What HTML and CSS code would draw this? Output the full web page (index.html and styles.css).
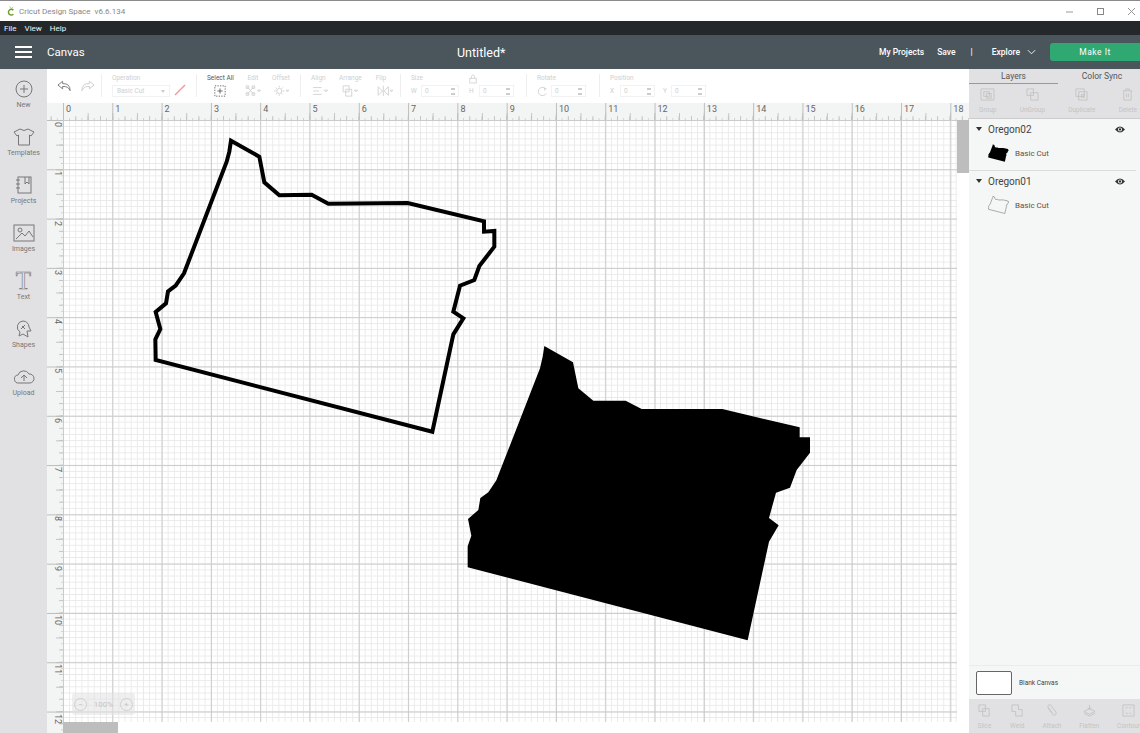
FILE: index.html
```html
<!DOCTYPE html>
<html lang="en">
<head>
    <meta charset="UTF-8">
    <title>Cricut Design Space</title>
    <link rel="stylesheet" href="styles.css">
</head>
<body>
<div class="app">
    <div class="titlebar">
        <svg class="logo" viewBox="0 0 10 12"><path d="M8 5 A3.6 3.6 0 1 0 8 10" fill="none" stroke="#6f9a2c" stroke-width="1.8"/><path d="M3 .5 Q5 1 5.5 3.2 M8 1 L5.5 3" fill="none" stroke="#8cc63f" stroke-width="1"/></svg>
        <span class="app-name">Cricut Design Space</span>
        <span class="app-version">v6.6.134</span>
        <div class="window-controls">
            <svg viewBox="0 0 9 9"><path d="M1 5H8" stroke="#999" fill="none"/></svg>
            <svg viewBox="0 0 9 9"><rect x="1.5" y="1.5" width="6" height="6" stroke="#888" fill="none"/></svg>
            <svg viewBox="0 0 9 9"><path d="M1 1L8 8M8 1L1 8" stroke="#999" fill="none"/></svg>
        </div>
    </div>
    <div class="menubar">
        <span>File</span>
        <span>View</span>
        <span>Help</span>
    </div>
    <div class="header">
        <div class="header-left">
            <div class="hamburger"><i></i><i></i><i></i></div>
            <span class="page-name">Canvas</span>
        </div>
        <span class="doc-name">Untitled*</span>
        <div class="header-right">
            <span>My Projects</span>
            <span class="save">Save</span>
            <span class="sep">|</span>
            <span class="explore">Explore</span>
            <svg class="chevron" viewBox="0 0 10 6"><path d="M1 1L5 5L9 1" fill="none" stroke="#fff"/></svg>
            <button class="make-it">Make It</button>
        </div>
    </div>

    <div class="main">
        <nav class="sidebar">
            <div class="nav-item">
                <svg viewBox="0 0 20 20"><circle cx="10" cy="10" r="8" /><path d="M10 6V14M6 10H14"/></svg>
                <span>New</span>
            </div>
            <div class="nav-item">
                <svg viewBox="0 0 22 20"><path d="M7 2 Q11 5 15 2 L21 5 L18 9 L16.500 8 L16.500 18 L5.500 18 L5.500 8 L4 9 L1 5 Z"/></svg>
                <span>Templates</span>
            </div>
            <div class="nav-item">
                <svg viewBox="0 0 20 20"><rect x="4" y="2" width="13" height="16"/><path d="M2 5H6M2 9H6M2 13H6M11 2V9L13 7L15 9V2"/></svg>
                <span>Projects</span>
            </div>
            <div class="nav-item">
                <svg viewBox="0 0 22 20"><rect x="1" y="2" width="20" height="16"/><circle cx="7" cy="7" r="2"/><path d="M3 16L9 10L12 13L16 8L20 14"/></svg>
                <span>Images</span>
            </div>
            <div class="nav-item">
                <b class="text-glyph">T</b>
                <span>Text</span>
            </div>
            <div class="nav-item">
                <svg viewBox="0 0 20 20"><path d="M9 2 A6 6 0 0 1 15 8 L17 12 L13 12 L14 18 L9 15 L5 17 L6 13 A6 6 0 0 1 9 2Z"/><path d="M8 7L11 10M11 6L7 10"/></svg>
                <span>Shapes</span>
            </div>
            <div class="nav-item">
                <svg viewBox="0 0 22 20"><path d="M6 16 A4 4 0 0 1 5 8 A6 6 0 0 1 16 7 A4.500 4.500 0 0 1 17 16 Z"/><path d="M11 14V9M8 11L11 8L14 11"/></svg>
                <span>Upload</span>
            </div>
        </nav>

        <div class="workspace">
            <div class="toolbar">
                <div class="tool-group history">
                    <svg class="undo" viewBox="0 0 16 14"><path d="M6 2L1 6L6 10V7.500Q12 7 14 12Q14 4 6 4.500Z"/></svg>
                    <svg class="redo" viewBox="0 0 16 14"><path d="M10 2L15 6L10 10V7.500Q4 7 2 12Q2 4 10 4.500Z"/></svg>
                </div>
                <div class="tool-group operation">
                    <div class="cell">
                        <label>Operation</label>
                        <div class="select">Basic Cut<i class="caret"></i></div>
                    </div>
                    <svg class="linetype" viewBox="0 0 12 12"><path d="M1 11L11 1"/></svg>
                </div>
                <div class="tool-group edits">
                    <div class="cell center active">
                        <label>Select All</label>
                        <svg viewBox="0 0 14 14"><rect x="1" y="1" width="12" height="12" fill="none" stroke="#555" stroke-dasharray="1.500 1.500"/><path d="M7 4V10M4 7H10" stroke="#555" fill="none"/></svg>
                    </div>
                    <div class="cell center">
                        <label>Edit</label>
                        <svg class="wide" viewBox="0 0 18 14"><path class="faded" d="M2 2L10 11M10 2L2 11M1 1H4V4H1ZM8 1H11V4H8ZM1 9H4V12H1ZM8 9H11V12H8ZM14 6H18L16 8Z"/></svg>
                    </div>
                    <div class="cell center">
                        <label>Offset</label>
                        <svg class="wide" viewBox="0 0 18 14"><circle class="faded" cx="7" cy="7" r="3"/><path class="faded" d="M7 1V3M7 11V13M1 7H3M11 7H13M3 3L4.500 4.500M11 3L9.500 4.500M3 11L4.500 9.500M11 11L9.500 9.500M15 6H18L16.500 8Z"/></svg>
                    </div>
                </div>
                <div class="tool-group arrange">
                    <div class="cell">
                        <label>Align</label>
                        <svg class="wide" viewBox="0 0 18 14"><path class="faded" d="M1 3H11M1 7H8M1 11H11M14 6H18L16 8Z"/></svg>
                    </div>
                    <div class="cell center">
                        <label>Arrange</label>
                        <svg class="wide" viewBox="0 0 18 14"><path class="faded" d="M1 1H8V8H1ZM4 5H11V13H4ZM14 6H18L16 8Z"/></svg>
                    </div>
                    <div class="cell flip">
                        <label>Flip</label>
                        <svg class="wide" viewBox="0 0 18 14"><path class="faded" d="M1 2L6 7L1 12ZM7 1V13M13 2L8 7L13 12ZM15 6H18L16.500 8Z"/></svg>
                    </div>
                </div>
                <div class="tool-group size">
                    <div class="cell">
                        <label>Size</label>
                        <div class="field-row"><em>W</em><div class="field">0<i class="spin"></i></div></div>
                    </div>
                    <div class="cell lock-cell">
                        <svg class="lock" viewBox="0 0 10 12"><rect class="faded" x="1" y="5" width="8" height="6"/><path class="faded" d="M3 5V3A2 2 0 0 1 7 3V5"/></svg>
                        <div class="field-row"><em>H</em><div class="field short">0<i class="spin"></i></div></div>
                    </div>
                </div>
                <div class="tool-group rotate">
                    <div class="cell">
                        <label>Rotate</label>
                        <div class="field-row">
                            <svg class="rotate-icon" viewBox="0 0 12 12"><path class="faded" d="M10 8A4.500 4.500 0 1 1 8 2M8 2L10.500 3.500M8 2L8.500 5"/></svg>
                            <div class="field short">0<i class="spin"></i></div>
                        </div>
                    </div>
                </div>
                <div class="tool-group position">
                    <div class="cell">
                        <label>Position</label>
                        <div class="field-row">
                            <em>X</em><div class="field short">0<i class="spin"></i></div>
                            <em class="y">Y</em><div class="field short">0<i class="spin"></i></div>
                        </div>
                    </div>
                </div>
            </div>

            <div class="ruler-top">
                <span>0</span><span>1</span><span>2</span><span>3</span><span>4</span><span>5</span><span>6</span><span>7</span><span>8</span><span>9</span><span>10</span><span>11</span><span>12</span><span>13</span><span>14</span><span>15</span><span>16</span><span>17</span><span>18</span>
            </div>

            <div class="stage">
                <div class="ruler-left">
                    <span>0</span><span>1</span><span>2</span><span>3</span><span>4</span><span>5</span><span>6</span><span>7</span><span>8</span><span>9</span><span>10</span><span>11</span><span>12</span>
                </div>
                <div class="canvas-col">
                    <div class="canvas">
                        <svg class="shape shape-outline" viewBox="0 0 1110 930">
                            <polygon fill="none" stroke="#000" stroke-width="12" stroke-linejoin="miter" points="273,32 358,80 373,157 418,196 515,194 565,221 803,219 1032,274 1032,305 1063,303 1063,350 1018,408 1003,450 960,467 940,545 970,565 940,613 877,905 47,690 46,628 61,597 47,546 78,520 84,484 107,467 132,430 260,95 268,65"/>
                        </svg>
                        <svg class="shape shape-solid" viewBox="0 0 1110 945">
                            <polygon fill="#000" points="268,33 354,82 370,160 415,197 512,197 560,222 802,222 1034,277 1034,307 1065,307 1065,353 1025,405 1005,458 963,473 942,549 971,571 942,620 878,916 38,697 38,634 49,602 39,552 70,525 76,489 100,472 124,436 255,100 263,65"/>
                        </svg>
                        <div class="zoom-control">
                            <i>−</i>
                            <span>100%</span>
                            <i>+</i>
                        </div>
                    </div>
                    <div class="hscroll"><div class="hthumb"></div></div>
                </div>
                <div class="vscroll"><div class="vthumb"></div></div>
            </div>
        </div>

        <aside class="panel">
            <div class="tabs">
                <div class="tab active">Layers</div>
                <div class="tab sync">Color Sync</div>
            </div>
            <div class="panel-tools">
                <div class="panel-tool">
                    <svg viewBox="0 0 16 14"><path class="dim" d="M1 1H15V13H1ZM4 4H10V9H4ZM7 6H12V11H7Z"/></svg>
                    <span>Group</span>
                </div>
                <div class="panel-tool">
                    <svg viewBox="0 0 16 14"><path class="dim" d="M2 1H9V8H2ZM6 5H14V13H6Z"/></svg>
                    <span>UnGroup</span>
                </div>
                <div class="panel-tool">
                    <svg viewBox="0 0 16 14"><path class="dim" d="M2 1H11V9H2ZM5 4H14V13H5ZM8 7H11V10H8Z"/></svg>
                    <span>Duplicate</span>
                </div>
                <div class="panel-tool">
                    <svg viewBox="0 0 16 14"><path class="dim" d="M3 3H13M6 3V1H10V3M4 3V13H12V3M7 6V10M9 6V10"/></svg>
                    <span>Delete</span>
                </div>
            </div>

            <div class="layers">
                <div class="layer">
                    <div class="layer-head">
                        <i class="arrow"></i>
                        <span class="layer-name">Oregon02</span>
                        <svg class="eye" viewBox="0 0 12 8"><path d="M0 4Q6 -3 12 4Q6 11 0 4Z" fill="#333"/><circle cx="6" cy="4" r="2.400" fill="#fff"/><circle cx="6" cy="4" r="1.400" fill="#333"/></svg>
                    </div>
                    <div class="layer-body">
                        <svg class="thumb" viewBox="30 20 1050 910"><polygon fill="#000" points="268,33 354,82 370,160 415,197 512,197 560,222 802,222 1034,277 1034,307 1065,307 1065,353 1025,405 1005,458 963,473 942,549 971,571 942,620 878,916 38,697 38,634 49,602 39,552 70,525 76,489 100,472 124,436 255,100 263,65"/></svg>
                        <span>Basic Cut</span>
                    </div>
                </div>
                <div class="layer">
                    <div class="layer-head">
                        <i class="arrow"></i>
                        <span class="layer-name">Oregon01</span>
                        <svg class="eye" viewBox="0 0 12 8"><path d="M0 4Q6 -3 12 4Q6 11 0 4Z" fill="#333"/><circle cx="6" cy="4" r="2.400" fill="#fff"/><circle cx="6" cy="4" r="1.400" fill="#333"/></svg>
                    </div>
                    <div class="layer-body">
                        <svg class="thumb" viewBox="30 20 1050 910"><polygon fill="none" stroke="#777" stroke-width="30" points="273,32 358,80 373,157 418,196 515,194 565,221 803,219 1032,274 1032,305 1063,303 1063,350 1018,408 1003,450 960,467 940,545 970,565 940,613 877,905 47,690 46,628 61,597 47,546 78,520 84,484 107,467 132,430 260,95 268,65"/></svg>
                        <span>Basic Cut</span>
                    </div>
                </div>
            </div>

            <div class="blank-canvas">
                <div class="swatch"></div>
                <span>Blank Canvas</span>
            </div>
            <div class="panel-bottom">
                <div class="panel-tool">
                    <svg viewBox="0 0 16 14"><path class="dim" d="M2 1H9V8H2ZM6 5H13V13H6Z"/></svg>
                    <span>Slice</span>
                </div>
                <div class="panel-tool">
                    <svg viewBox="0 0 16 14"><path class="dim" d="M2 1H9V6H13V13H6V8H2Z"/></svg>
                    <span>Weld</span>
                </div>
                <div class="panel-tool">
                    <svg viewBox="0 0 16 14"><path class="dim" d="M4 4L10 12Q13 13 13 9L7 1Q4 0 4 3L9 10"/></svg>
                    <span>Attach</span>
                </div>
                <div class="panel-tool">
                    <svg viewBox="0 0 16 14"><path class="dim" d="M8 1V6M6 4L8 6L10 4M2 8L8 5L14 8L8 11ZM2 10L8 13L14 10"/></svg>
                    <span>Flatten</span>
                </div>
                <div class="panel-tool">
                    <svg viewBox="0 0 16 14"><path class="dim" d="M2 1H14V13H2ZM5 4H7M9 4H11M5 10H7M9 10H11"/></svg>
                    <span>Contour</span>
                </div>
            </div>
        </aside>
    </div>
</div>
</body>
</html>
```

FILE: styles.css
```css
* {
    box-sizing: border-box;
}
html, body {
    margin: 0;
    padding: 0;
    height: 100%;
    overflow: hidden;
    background-color: #fff;
    font-family: Roboto, "Liberation Sans", sans-serif;
}
.app {
    display: flex;
    flex-direction: column;
    width: 1140px;
    height: 733px;
}

/* window chrome */
.titlebar {
    display: flex;
    align-items: center;
    height: 21px;
    padding-left: 7px;
    border-top: 1px solid #8a8a8a;
    font-size: 8px;
    color: #888;
}
.logo {
    width: 8px;
    height: 10px;
    margin-right: 4px;
}
.app-version {
    margin-left: 4px;
}
.window-controls {
    display: flex;
    gap: 22px;
    margin-left: auto;
    margin-right: 4px;
}
.window-controls svg {
    width: 9px;
    height: 9px;
}
.menubar {
    display: flex;
    align-items: center;
    gap: 8px;
    height: 14px;
    padding-left: 4px;
    background-color: #25282b;
    font-size: 8px;
    color: #f2f2f2;
}
.header {
    display: flex;
    align-items: center;
    height: 34px;
    background-color: #4a555c;
    color: #fff;
}
.header-left {
    display: flex;
    align-items: center;
    width: 457px;
    padding-left: 15px;
}
.hamburger {
    display: flex;
    flex-direction: column;
    gap: 3px;
    width: 17px;
    margin-right: 15px;
}
.hamburger i {
    height: 2px;
    background-color: #fff;
}
.page-name {
    font-size: 11.5px;
}
.doc-name {
    font-size: 12.5px;
}
.header-right {
    display: flex;
    align-items: center;
    margin-left: auto;
    font-size: 8.5px;
    font-weight: 500;
}
.save {
    margin-left: 13px;
}
.sep {
    margin-left: 15px;
}
.explore {
    margin-left: 19px;
}
.chevron {
    width: 9px;
    height: 6px;
    margin-left: 7px;
}
.make-it {
    width: 90px;
    height: 18px;
    margin-left: 14px;
    border: none;
    border-radius: 3px 0 0 3px;
    background-color: #2fa871;
    color: #fff;
    font-family: inherit;
    font-size: 8.5px;
    letter-spacing: 0.5px;
}

.main {
    display: flex;
    flex: 1;
    min-height: 0;
}

/* left navigation */
.sidebar {
    display: flex;
    flex-direction: column;
    width: 47px;
    padding-top: 10px;
    background-color: #e1e1e3;
}
.nav-item {
    display: flex;
    flex-direction: column;
    align-items: center;
    height: 48px;
    font-size: 7px;
    color: #777;
}
.nav-item svg {
    width: 22px;
    height: 20px;
    margin-bottom: 2px;
    fill: none;
    stroke: #777;
    stroke-width: 1;
}
.text-glyph {
    height: 20px;
    margin-bottom: 2px;
    font-family: "Liberation Serif", serif;
    font-size: 25px;
    font-weight: 400;
    line-height: 20px;
    color: #e1e1e3;
    -webkit-text-stroke: 0.6px #777;
}

.workspace {
    display: flex;
    flex: 1;
    flex-direction: column;
    min-width: 0;
}

/* top toolbar */
.toolbar {
    display: flex;
    height: 34px;
    background-color: #fff;
    font-size: 6.5px;
    color: #cfcfcf;
}
.tool-group {
    display: flex;
    position: relative;
    height: 23px;
    margin-top: 5px;
    padding-left: 10px;
    border-right: 1px solid #eee;
}
.history {
    width: 55px;
    align-items: center;
    gap: 8px;
}
.history svg {
    width: 15px;
    height: 14px;
}
.undo path {
    fill: #fff;
    stroke: #777;
}
.redo path {
    fill: #fff;
    stroke: #ccc;
}
.operation {
    width: 95px;
}
.edits {
    width: 104px;
    gap: 10px;
}
.arrange {
    width: 100px;
    gap: 10px;
}
.flip {
    margin-left: 4px;
}
.size {
    width: 126px;
    gap: 10px;
}
.rotate {
    width: 73px;
}
.position {
    width: 111px;
    border-right: none;
}
.cell {
    display: flex;
    flex-direction: column;
    align-items: flex-start;
    gap: 2px;
}
.cell.center {
    align-items: center;
}
.cell label {
    height: 9px;
    line-height: 9px;
}
.cell svg {
    width: 14px;
    height: 13px;
}
.cell svg.wide {
    width: 18px;
}
.active {
    color: #555;
}
.faded {
    fill: none;
    stroke: #cfcfcf;
    stroke-width: 1;
}
.select {
    display: flex;
    align-items: center;
    justify-content: space-between;
    width: 58px;
    height: 12px;
    padding: 0 4px;
    border: 1px solid #f2f2f2;
}
.caret {
    border-top: 3px solid #ccc;
    border-left: 2px solid transparent;
    border-right: 2px solid transparent;
}
.linetype {
    width: 12px;
    height: 12px;
    margin: 10px 0 0 4px;
}
.linetype path {
    stroke: #ee9a9d;
    stroke-width: 1.5;
}
.field-row {
    display: flex;
    align-items: center;
    height: 12px;
}
.field-row em {
    width: 10px;
    font-style: normal;
}
.field-row em.y {
    width: 8px;
    margin-left: 8px;
}
.field {
    display: flex;
    align-items: center;
    justify-content: space-between;
    width: 38px;
    height: 12px;
    padding: 0 3px;
    border: 1px solid #f2f2f2;
}
.field.short {
    width: 35px;
}
.spin {
    width: 4px;
    height: 7px;
    border-top: 2px solid #ccc;
    border-bottom: 2px solid #ccc;
}
.lock-cell {
    gap: 0;
}
.cell svg.lock {
    width: 8px;
    height: 10px;
    margin-bottom: 1px;
}
.cell svg.rotate-icon {
    width: 11px;
    height: 11px;
    margin-right: 3px;
}

/* rulers */
.ruler-top {
    display: flex;
    height: 17px;
    padding-left: 16px;
    background-color: #f3f4f4;
    background-image:
        linear-gradient(to right, #bdbdbd 1px, transparent 1px),
        linear-gradient(to right, #c4c4c4 1px, transparent 1px),
        linear-gradient(to right, #c4c4c4 1px, transparent 1px),
        linear-gradient(to right, #cfcfcf 1px, transparent 1px);
    background-size: 49.3px 17px, 24.65px 7px, 12.325px 4px, 6.1625px 2px;
    background-position: 16px bottom, 16px bottom, 16px bottom, 16px bottom;
    background-repeat: repeat-x;
    font-size: 9px;
    color: #666;
}
.ruler-top span {
    flex: 0 0 49.3px;
    padding: 1px 0 0 3px;
}
.stage {
    display: flex;
    flex: 1;
    min-height: 0;
}
.ruler-left {
    display: flex;
    flex: 0 0 16px;
    flex-direction: column;
    background-color: #f3f4f4;
    background-image:
        linear-gradient(to bottom, #bdbdbd 1px, transparent 1px),
        linear-gradient(to bottom, #c4c4c4 1px, transparent 1px),
        linear-gradient(to bottom, #c4c4c4 1px, transparent 1px),
        linear-gradient(to bottom, #cfcfcf 1px, transparent 1px);
    background-size: 16px 49.3px, 7px 24.65px, 4px 12.325px, 2px 6.1625px;
    background-position: right top, right top, right top, right top;
    background-repeat: repeat-y;
    font-size: 9px;
    color: #666;
}
.ruler-left span {
    flex: 0 0 49.3px;
    padding: 2px 0 0 3px;
    writing-mode: vertical-rl;
}
.canvas-col {
    display: flex;
    flex: 1;
    flex-direction: column;
    min-width: 0;
}

/* cutting mat */
.canvas {
    position: relative;
    flex: 1;
    overflow: hidden;
    background-color: #fff;
    background-image:
        linear-gradient(to right, #cbcbcb 1px, transparent 1px),
        linear-gradient(to bottom, #cbcbcb 1px, transparent 1px),
        linear-gradient(to right, #e9e9e9 1px, transparent 1px),
        linear-gradient(to bottom, #e9e9e9 1px, transparent 1px);
    background-size: 49.3px 49.3px, 49.3px 49.3px, 6.1625px 6.1625px, 6.1625px 6.1625px;
}
.shape {
    position: absolute;
}
.shape-outline {
    left: 77px;
    top: 10px;
    width: 370px;
    height: 310px;
}
.shape-solid {
    left: 392px;
    top: 215px;
    width: 370px;
    height: 315px;
}
.zoom-control {
    display: flex;
    position: absolute;
    left: 9px;
    bottom: 7px;
    align-items: center;
    justify-content: space-between;
    width: 63px;
    height: 22px;
    padding: 0 2px;
    border-radius: 3px;
    background-color: rgba(225, 225, 227, 0.55);
    font-size: 8px;
    color: #c4c4c4;
}
.zoom-control i {
    width: 13px;
    height: 13px;
    border: 1px solid #d0d0d0;
    border-radius: 50%;
    font-style: normal;
    line-height: 11px;
    text-align: center;
}
.hscroll {
    flex: 0 0 11px;
    background-color: #fff;
}
.hthumb {
    width: 55px;
    height: 11px;
    background-color: #bdbdbd;
}
.vscroll {
    flex: 0 0 12px;
    background-color: #fff;
}
.vthumb {
    width: 12px;
    height: 53px;
    background-color: #bdbdbd;
}

/* right panel */
.panel {
    display: flex;
    flex: 0 0 171px;
    flex-direction: column;
    background-color: #f5f6f6;
}
.tabs {
    display: flex;
    height: 15px;
    background-color: #e1e1e3;
    font-size: 8.5px;
    color: #555;
}
.tab {
    flex: 1;
    line-height: 14px;
    text-align: center;
}
.tab.sync {
    padding-left: 6px;
}
.tab.active {
    flex: 0 0 89px;
    border-bottom: 1px solid #999;
}
.panel-tools {
    display: flex;
    justify-content: space-between;
    height: 35px;
    padding: 4px 3px 0 10px;
    background-color: #e1e1e3;
    border-bottom: 1px solid #ccc;
}
.panel-tool {
    display: flex;
    flex-direction: column;
    align-items: center;
    gap: 5px;
    font-size: 6.5px;
    color: #c4c4c4;
}
.panel-tool svg {
    width: 15px;
    height: 13px;
}
.dim {
    fill: none;
    stroke: #c4c4c4;
    stroke-width: 1;
}
.layers {
    flex: 1;
    padding-right: 4px;
}
.layer {
    height: 52px;
    border-bottom: 1px solid #dcdcdc;
}
.layer:last-child {
    border-bottom: none;
}
.layer-head {
    display: flex;
    align-items: center;
    height: 20px;
    padding-left: 7px;
}
.arrow {
    border-top: 4px solid #333;
    border-left: 3px solid transparent;
    border-right: 3px solid transparent;
}
.layer-name {
    margin-left: 6px;
    font-size: 10px;
    color: #444;
}
.eye {
    width: 10px;
    height: 7px;
    margin-left: auto;
    margin-right: 11px;
}
.layer-body {
    display: flex;
    align-items: center;
    height: 28px;
    padding-left: 19px;
    font-size: 8px;
    color: #555;
}
.thumb {
    width: 21px;
    height: 18px;
    margin-right: 6px;
}
.blank-canvas {
    display: flex;
    align-items: center;
    height: 34px;
    padding-left: 7px;
    border-top: 1px solid #ebebeb;
    font-size: 6.5px;
    color: #444;
}
.swatch {
    width: 36px;
    height: 24px;
    margin-right: 7px;
    border: 1px solid #666;
    border-radius: 2px;
    background-color: #fff;
}
.panel-bottom {
    display: flex;
    justify-content: space-between;
    height: 34px;
    padding: 5px 0 0 8px;
    background-color: #e1e1e3;
}
```
